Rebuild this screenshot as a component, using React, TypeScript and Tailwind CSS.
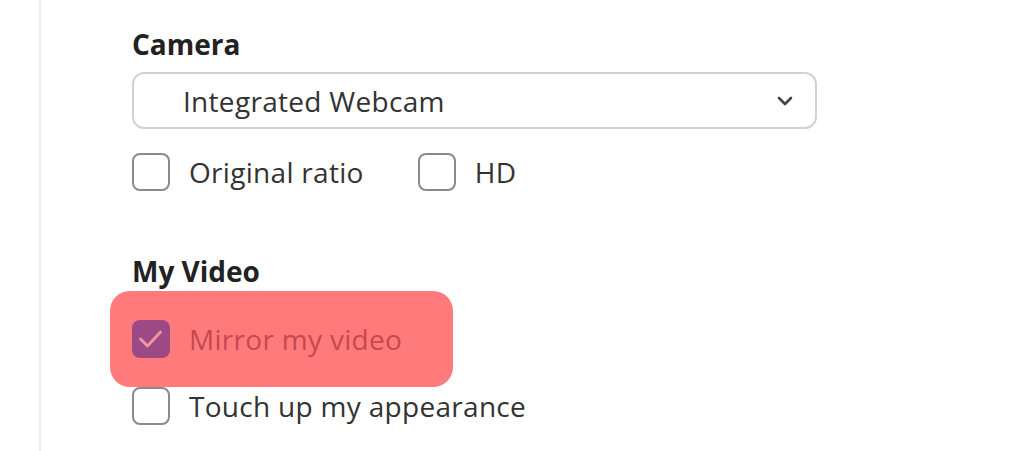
import React from "react";
import { ChevronDown } from "lucide-react";

const Box: React.FC<{ checked?: boolean }> = ({ checked }) =>
  checked ? (
    <span className="flex h-[38px] w-[38px] shrink-0 items-center justify-center rounded-[8px] bg-[#9b4a86]">
      <svg width="38" height="38" viewBox="0 0 38 38" fill="none">
        <path
          d="M8.5 19l7 7 13-14"
          stroke="#f395a4"
          strokeWidth="2.8"
          strokeLinecap="round"
          strokeLinejoin="round"
        />
      </svg>
    </span>
  ) : (
    <span className="block h-[38px] w-[38px] shrink-0 rounded-[8px] border-2 border-[#8a8a8a] bg-white" />
  );

const Check: React.FC<{ label: string; checked?: boolean }> = ({ label, checked }) => (
  <label className="flex h-[38px] items-center gap-[19px]">
    <Box checked={checked} />
    <span
      className={`text-[28px] leading-none tracking-[0.3px] ${
        checked ? "text-[#c64850]" : "text-[#333]"
      }`}
    >
      {label}
    </span>
  </label>
);

export default function App() {
  return (
    <div className="flex h-[451px] w-full bg-white font-['Open_Sans',sans-serif]">
      <div className="ml-[39px] h-full w-[2px] bg-[#efefef]" />
      <div className="flex flex-col pl-[91px]">
        {/* Camera */}
        <h2 className="mt-[26px] h-[36px] text-[28px] font-bold leading-[36px] text-[#222]">Camera</h2>
        <div className="mt-[10px] flex h-[57px] w-[685px] items-center justify-between rounded-[12px] border-2 border-[#d2d2d2] pl-[49px] pr-[18px]">
          <span className="text-[28px] tracking-[0.3px] text-[#333]">Integrated Webcam</span>
          <ChevronDown size={24} strokeWidth={2.6} className="text-[#444]" />
        </div>
        <div className="mt-[24px] flex items-center gap-[54px]">
          <Check label="Original ratio" />
          <Check label="HD" />
        </div>

        {/* My Video */}
        <h2 className="mt-[62px] h-[36px] text-[28px] font-bold leading-[36px] text-[#222]">My Video</h2>
        <div className="-ml-[22px] mt-[2px] flex h-[96px] w-[343px] items-center rounded-[20px] bg-[#ff7b7b] pl-[22px]">
          <Check label="Mirror my video" checked />
        </div>
        <Check label="Touch up my appearance" />
      </div>
    </div>
  );
}
